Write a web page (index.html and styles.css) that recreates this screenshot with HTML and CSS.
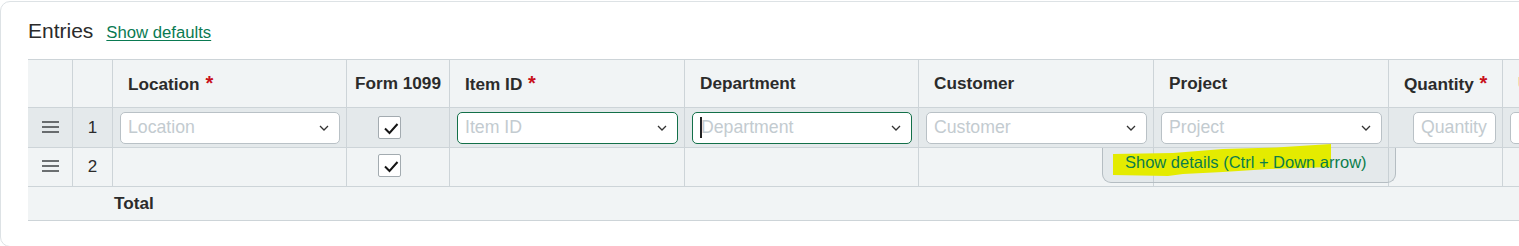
FILE: index.html
```html
<!DOCTYPE html>
<html>
<head>
  <meta charset="utf-8">
  <meta name="viewport" content="width=device-width, initial-scale=1.0">
  <title>Entries</title>
  <link rel="stylesheet" href="styles.css">
</head>
<body>
  <div class="card">
    <div class="card-head">
      <h2 class="title">Entries</h2>
      <a class="link" href="#">Show defaults</a>
    </div>
    <div class="grid-wrap">
      <table class="entries">
        <colgroup>
          <col class="c-drag"><col class="c-num"><col class="c-wide"><col class="c-form">
          <col class="c-wide2"><col class="c-wide"><col class="c-wide2"><col class="c-wide2">
          <col class="c-qty"><col class="c-rest">
        </colgroup>
        <tr class="head-row">
          <th></th>
          <th></th>
          <th>Location <span class="req">*</span></th>
          <th class="center">Form 1099</th>
          <th>Item ID <span class="req">*</span></th>
          <th>Department</th>
          <th>Customer</th>
          <th>Project</th>
          <th>Quantity <span class="req">*</span></th>
          <th>Unit price</th>
        </tr>
        <tr class="row active">
          <td class="drag"><svg class="burger" width="17" height="12" viewBox="0 0 17 12"><path d="M0 1h17M0 6h17M0 11h17" stroke="#3f4345" stroke-width="1.4"/></svg></td>
          <td class="num">1</td>
          <td class="field"><div class="select"><span class="ph">Location</span><svg class="chev" width="10" height="6" viewBox="0 0 10 6"><path d="M1 1l4 4 4-4" fill="none" stroke="#333" stroke-width="1.3"/></svg></div></td>
          <td class="check-cell"><span class="check"><svg width="23" height="23" viewBox="0 0 23 23"><path d="M7 12.5l4.5 4.5 8-9" fill="none" stroke="#151515" stroke-width="2"/></svg></span></td>
          <td class="field"><div class="select focus"><span class="ph">Item ID</span><svg class="chev" width="10" height="6" viewBox="0 0 10 6"><path d="M1 1l4 4 4-4" fill="none" stroke="#333" stroke-width="1.3"/></svg></div></td>
          <td class="field"><div class="select focus"><span class="caret"></span><span class="ph">Department</span><svg class="chev" width="10" height="6" viewBox="0 0 10 6"><path d="M1 1l4 4 4-4" fill="none" stroke="#333" stroke-width="1.3"/></svg></div></td>
          <td class="field"><div class="select"><span class="ph">Customer</span><svg class="chev" width="10" height="6" viewBox="0 0 10 6"><path d="M1 1l4 4 4-4" fill="none" stroke="#333" stroke-width="1.3"/></svg></div></td>
          <td class="field"><div class="select"><span class="ph">Project</span><svg class="chev" width="10" height="6" viewBox="0 0 10 6"><path d="M1 1l4 4 4-4" fill="none" stroke="#333" stroke-width="1.3"/></svg></div></td>
          <td class="field right"><div class="select qty"><span class="ph">Quantity</span></div></td>
          <td class="field"><div class="select"><span class="ph">Unit price</span></div></td>
        </tr>
        <tr class="row second">
          <td class="drag"><svg class="burger" width="17" height="12" viewBox="0 0 17 12"><path d="M0 1h17M0 6h17M0 11h17" stroke="#3f4345" stroke-width="1.4"/></svg></td>
          <td class="num">2</td>
          <td></td>
          <td class="check-cell"><span class="check"><svg width="23" height="23" viewBox="0 0 23 23"><path d="M7 12.5l4.5 4.5 8-9" fill="none" stroke="#151515" stroke-width="2"/></svg></span></td>
          <td></td><td></td><td></td><td></td><td></td><td></td>
        </tr>
        <tr class="total-row">
          <td colspan="2"></td>
          <td colspan="8" class="total">Total</td>
        </tr>
      </table>
      <div class="tip">
        <svg class="marker" width="240" height="40" viewBox="0 -6 240 40"><path d="M10 6 L70 5 L120 1 L173 -0.5 L228 -4 L228 19 L166 21 L120 24 L80 26 L65 28 L10 27 Z" fill="#e4eb00"/></svg>
        <span class="tip-text">Show details (Ctrl + Down arrow)</span>
      </div>
    </div>
  </div>
</body>
</html>
```

FILE: styles.css
```css
* {
    box-sizing: border-box;
}
html, body {
    margin: 0;
    overflow: hidden;
}
body {
    background-color: #fff;
    font-family: "Liberation Sans", Arial, sans-serif;
    color: #2b2b2b;
}
.card {
    margin-top: 1px;
    width: 1760px;
    height: 246px;
    border: 1px solid #dde2e5;
    border-radius: 10px;
    padding-left: 27px;
    overflow: hidden;
}
.card-head {
    display: flex;
    align-items: baseline;
    gap: 13px;
    height: 57px;
    padding-top: 17px;
}
.title {
    margin: 0;
    font-size: 21px;
    font-weight: 400;
    color: #2b2b2b;
}
.link {
    font-size: 16.7px;
    color: #0a7a52;
    text-decoration: underline;
    text-underline-offset: 2px;
}

/* Grid */
.grid-wrap {
    position: relative;
}
.entries {
    border-collapse: separate;
    border-spacing: 0;
    table-layout: fixed;
    width: 1680px;
    border-top: 1px solid #cdd4d8;
}
.c-drag { width: 45px; }
.c-num { width: 40px; }
.c-wide { width: 234px; }
.c-wide2 { width: 235px; }
.c-form { width: 103px; }
.c-qty { width: 114px; }
.c-rest { width: 240px; }
.entries th, .entries td {
    padding: 0;
    border-right: 1px solid #cdd4d8;
    border-bottom: 1px solid #cdd4d8;
    background-color: #f1f4f5;
    vertical-align: middle;
    white-space: nowrap;
    overflow: hidden;
}
.entries th {
    text-align: left;
    padding-left: 15px;
    font-size: 17.2px;
    font-weight: 700;
    color: #2b2b2b;
}
.entries th.center {
    text-align: center;
    padding-left: 0;
}
.req {
    color: #c8101a;
    font-size: 20px;
    margin-left: 1px;
}
.head-row { height: 48px; }
.row.active { height: 40px; }
.row.second { height: 39px; }
.total-row { height: 34px; }
.row.active td {
    background-color: #e4e9eb;
}
.drag {
    text-align: center;
}
.burger {
    display: block;
    margin: 0 auto 2px;
}
.num {
    text-align: center;
    font-size: 17px;
    color: #2b2b2b;
}
.field {
    padding: 0 6px 0 7px !important;
}
.field.right {
    text-align: right;
}
.select {
    display: flex;
    align-items: center;
    height: 32px;
    padding: 0 10px 0 7px;
    background-color: #fff;
    border: 1px solid #b9c1c6;
    border-radius: 5px;
    overflow: hidden;
}
.select.focus {
    border-color: #137049;
}
.select.qty {
    display: inline-flex;
    width: 83px;
    text-align: left;
}
.ph {
    flex: 1;
    font-size: 17.7px;
    color: #c3cbd0;
    white-space: nowrap;
}
.caret {
    display: inline-block;
    width: 2px;
    height: 21px;
    margin-right: -1px;
    background-color: #222;
}
.chev {
    flex: none;
}
.check-cell {
    padding-left: 31px !important;
}
.check {
    display: block;
    width: 23px;
    height: 23px;
    background-color: #fff;
    border: 1px solid #a3abb0;
    border-radius: 2px;
}
.check svg {
    display: block;
    margin: -1px;
}
.row.second .check-cell .check {
    margin-top: -3px;
}
.total-row td {
    border-right: none !important;
}
.total {
    padding-left: 1px !important;
    font-size: 17.2px;
    font-weight: 700;
}

/* Tooltip */
.tip {
    position: absolute;
    left: 1074px;
    top: 89px;
    width: 294px;
    height: 35px;
    padding: 5px 0 0 22px;
    background-color: rgba(180, 195, 202, 0.22);
    border: 1px solid #b5bdc2;
    border-top: none;
    border-radius: 0 0 9px 9px;
}
.marker {
    position: absolute;
    left: 0;
    top: -6px;
}
.tip-text {
    position: relative;
    font-size: 16.5px;
    color: #0b7d4c;
    white-space: nowrap;
}
```
